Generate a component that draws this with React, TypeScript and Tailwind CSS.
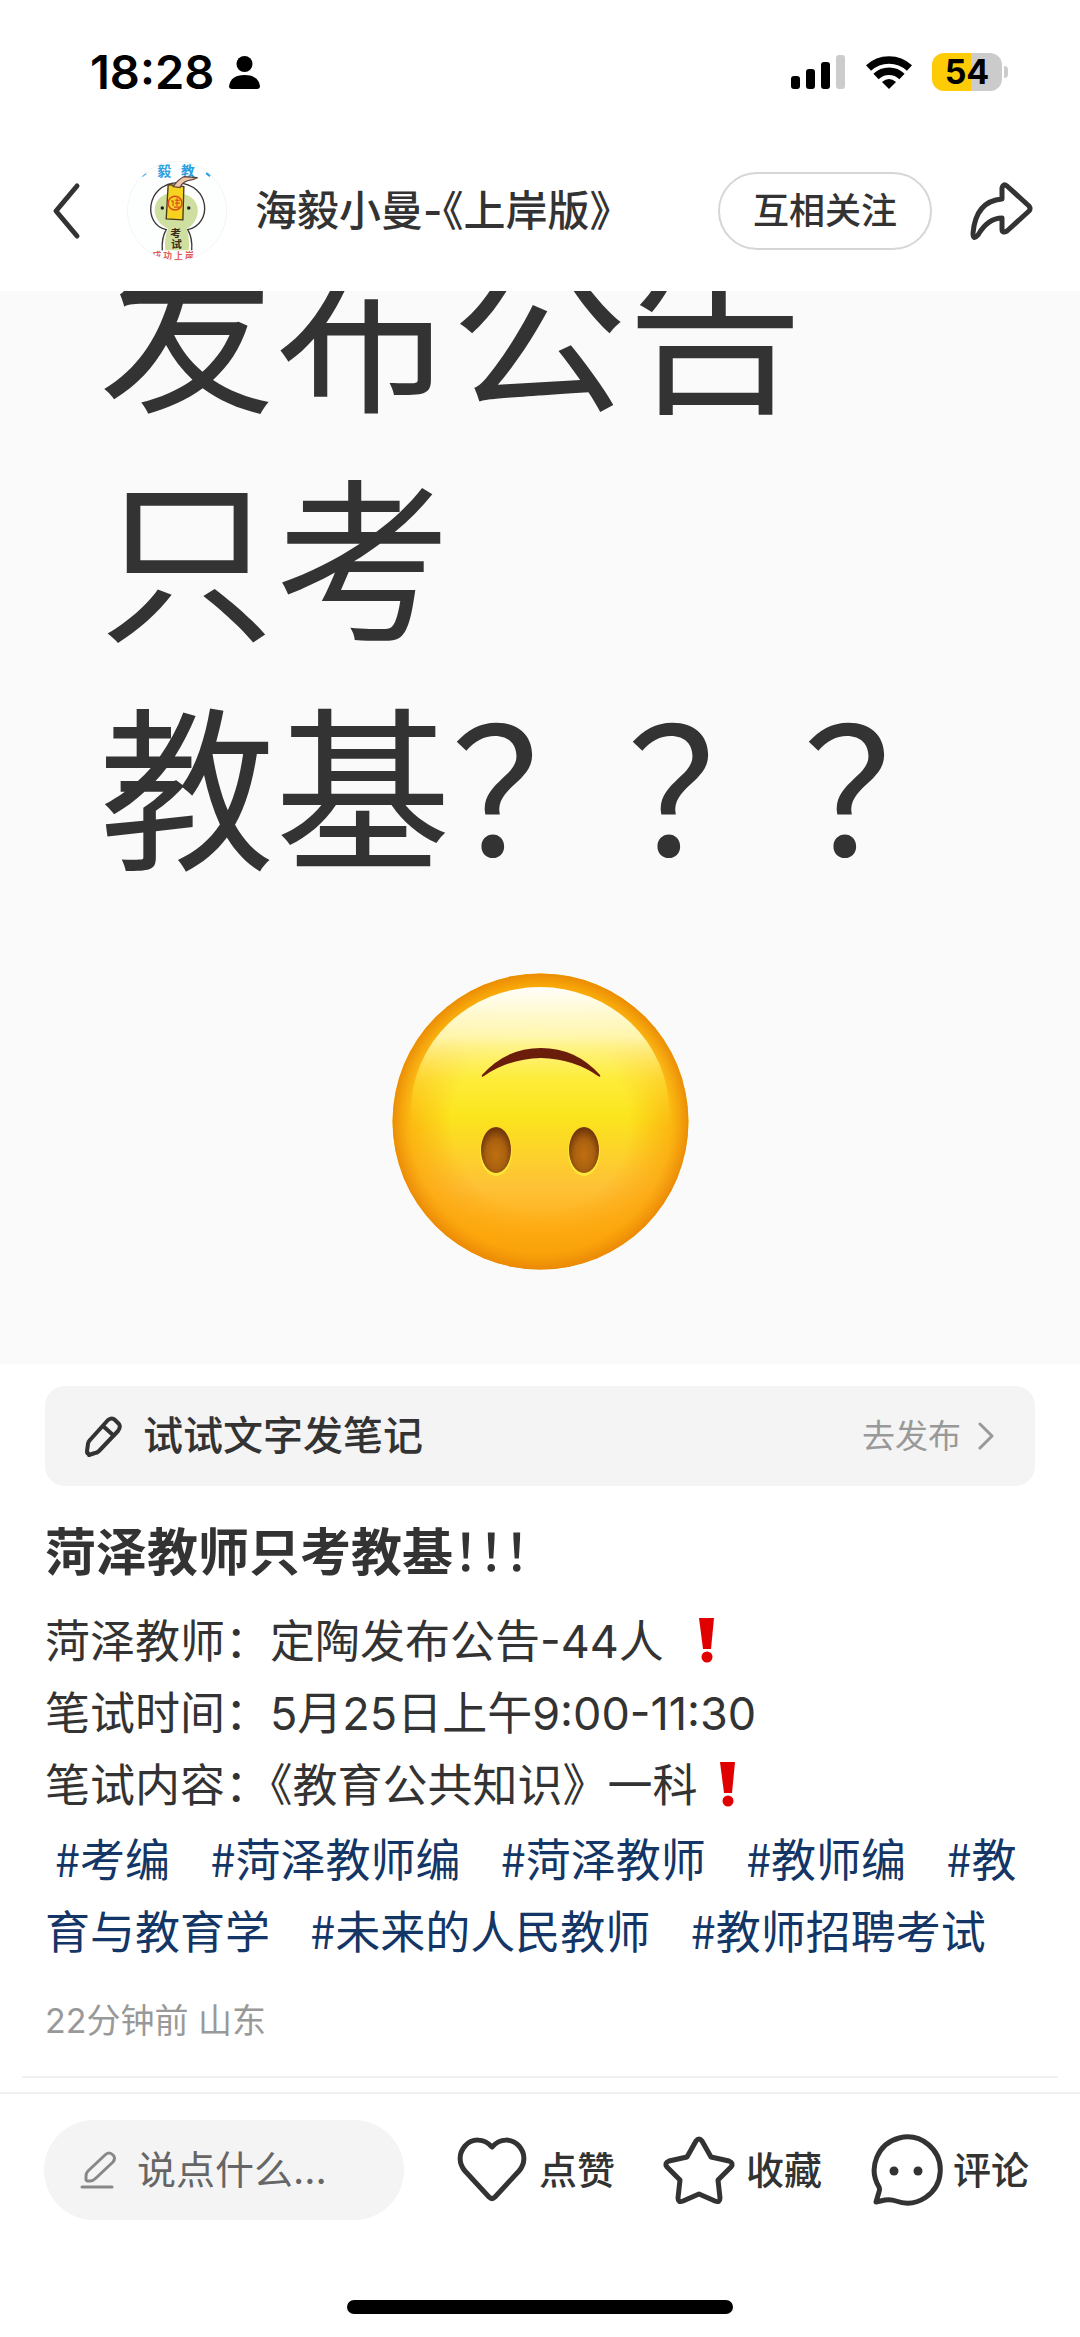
import React from 'react';

const tags = ['考编', '菏泽教师编', '菏泽教师', '教师编', '教育与教育学', '未来的人民教师', '教师招聘考试'];

const Avatar = () => (
  <svg className="size-[100px] shrink-0 rounded-full border border-[#f2f2f2]" viewBox="0 0 100 100" role="img" aria-label="海毅小曼头像">
    <rect width="100" height="100" fill="#fdfefe" />
    <g className="font-['Noto_Sans_CJK_SC',sans-serif]" fontWeight="700">
      <text x="30" y="14" fontSize="14" fill="#2f9fe0">毅</text>
      <text x="54" y="14" fontSize="14" fill="#2f9fe0">教</text>
      <text x="25" y="99" fontSize="9" fill="#e05a5a" xmlSpace="preserve">成 功 上 岸</text>
    </g>
    <path d="M14 14l4-3M80 11l4 3" stroke="#2f9fe0" strokeWidth="3" />
    {/* Figure */}
    <path d="M36 90Q35 78 40 69C16 64 19 24 50 22C84 23 86 64 62 69Q67 78 66 90Z" fill="#fff" />
    <path d="M38 90Q37 76 41 68C22 60 22 33 46 31C78 31 76 60 60 68Q63 78 62 90Z" fill="#cfdf9f" />
    <path d="M35 90Q34 78 39 69C15 64 18 23 50 21C85 23 86 64 61 69Q66 78 65 90" fill="none" stroke="#3b3535" strokeWidth="1.4" />
    <path d="M41 23L57 25L56 59L39 58Z" fill="#f7d321" stroke="#4a3c1c" strokeWidth="1.4" />
    <circle cx="48" cy="42" r="7" fill="none" stroke="#dc4a1c" strokeWidth="1.6" />
    <path d="M44 40h2v5M48 39h5M50 37v8M48 42h5M47 46h6" fill="none" stroke="#dc4a1c" strokeWidth="1.2" />
    <path d="M46 25Q52 17 57 15L71 16L66 18Q56 19 53 26Z" fill="#eec6ac" stroke="#5b4038" strokeWidth="1.2" />
    <circle cx="35" cy="47" r="1.8" fill="#222" />
    <circle cx="62" cy="47" r="1.8" fill="#222" />
    <g className="font-['Noto_Sans_CJK_SC',sans-serif]" fontWeight="700" fontSize="11" fill="#3a2a18">
      <text x="43" y="77">考</text>
      <text x="44" y="88">试</text>
    </g>
  </svg>
);

const UpsideDownFace = () => (
  <svg className="size-[297px]" viewBox="0 0 297 297" role="img" aria-label="倒脸">
    <defs>
      <linearGradient id="face" x1="0" y1="0" x2="0" y2="1">
        <stop offset="0" stopColor="#ffc800" />
        <stop offset="0.3" stopColor="#fde92f" />
        <stop offset="0.48" stopColor="#fbe51c" />
        <stop offset="0.72" stopColor="#fec137" />
        <stop offset="0.88" stopColor="#ffad14" />
        <stop offset="1" stopColor="#f09a08" />
      </linearGradient>
      <radialGradient id="edge" cx="0.5" cy="0.5" r="0.5">
        <stop offset="0.6" stopColor="#fb9d05" stopOpacity="0" />
        <stop offset="0.88" stopColor="#fba308" stopOpacity="0.65" />
        <stop offset="1" stopColor="#ea8806" stopOpacity="0.95" />
      </radialGradient>
      <linearGradient id="shine" x1="0" y1="0" x2="0" y2="1">
        <stop offset="0" stopColor="#fffefa" />
        <stop offset="0.2" stopColor="#fff8b4" stopOpacity="0.95" />
        <stop offset="0.38" stopColor="#fff04a" stopOpacity="0.45" />
        <stop offset="0.56" stopColor="#fde82e" stopOpacity="0" />
      </linearGradient>
      <radialGradient id="eye" cx="0.5" cy="0.6" r="0.55">
        <stop offset="0" stopColor="#bf6f10" />
        <stop offset="0.6" stopColor="#a9600f" />
        <stop offset="1" stopColor="#74380a" />
      </radialGradient>
    </defs>
    <circle cx="148.500" cy="148.500" r="148" fill="url(#face)" />
    <circle cx="148.500" cy="148.500" r="148" fill="url(#edge)" />
    <ellipse cx="148" cy="138" rx="129" ry="124" fill="url(#shine)" />
    <path d="M90 102Q114 75 149 75Q184 75 208 102Q209 105 206 103Q182 86 149 85Q116 86 92 103Q89 105 90 102Z" fill="#6b1d0c" />
    <ellipse cx="104" cy="179" rx="16" ry="24" fill="#fde53a" />
    <ellipse cx="192" cy="179" rx="16" ry="24" fill="#fde53a" />
    <ellipse cx="104" cy="177" rx="15" ry="23" fill="url(#eye)" />
    <ellipse cx="192" cy="177" rx="15" ry="23" fill="url(#eye)" />
  </svg>
);

const RedMark = () => (
  <svg className="inline-block h-[45px] w-[60px] align-[-5px]" viewBox="0 0 60 45" role="img" aria-label="❗">
    <path d="M22 0H37L34 31H26Z" fill="#e00000" />
    <circle cx="30" cy="39" r="5.500" fill="#e00000" />
  </svg>
);

const HeartIcon = () => (
  <svg className="h-[70px] w-[74px]" viewBox="0 0 74 70" fill="none" stroke="currentColor" strokeWidth="5" strokeLinejoin="round">
    <path d="M37 12C29 3 17 3 10 11C3 19 4 29 10 36L34 62Q37 65 40 62L64 36C70 29 71 19 64 11C57 3 45 3 37 12Z" />
  </svg>
);

const StarIcon = () => (
  <svg className="h-[70px] w-[74px]" viewBox="0 0 74 70" fill="none" stroke="currentColor" strokeWidth="5" strokeLinejoin="round">
    <path d="M34 6Q37 2 40 6L49 22L67 26Q72 28 69 32L56 45L58 63Q58 68 53 66L37 59L21 66Q16 68 16 63L18 45L5 32Q2 28 7 26L25 22Z" />
  </svg>
);

const CommentIcon = () => (
  <svg className="h-[72px] w-[74px]" viewBox="0 0 74 72" fill="none" stroke="currentColor" strokeWidth="5" strokeLinejoin="round">
    <path d="M10 53A33 33 0 1 1 27 67Q22 65 16 66L7 68L10 58Q11 55 10 53Z" />
    <circle cx="25" cy="37" r="4.500" fill="currentColor" stroke="none" />
    <circle cx="49" cy="37" r="4.500" fill="currentColor" stroke="none" />
  </svg>
);

const actions = [
  { label: '点赞', Icon: HeartIcon },
  { label: '收藏', Icon: StarIcon },
  { label: '评论', Icon: CommentIcon },
];

const StatusBar = () => (
  <div className="flex h-[144px] items-center justify-between pr-[72px] pl-[90px] text-black">
    <div className="flex items-center gap-[15px]">
      <span className="text-[47px] leading-[48px] font-semibold">18:28</span>
      <svg className="h-[33px] w-[31px]" viewBox="0 0 31 33" fill="currentColor">
        <circle cx="15.500" cy="8" r="8" />
        <path d="M3 33Q0 33 0 30Q2 19 15.500 19Q29 19 31 30Q31 33 28 33Z" />
      </svg>
    </div>
    <div className="flex items-center">
      <svg className="h-[34px] w-[54px]" viewBox="0 0 54 34">
        <rect x="0" y="21" width="9" height="13" rx="3" />
        <rect x="15" y="14" width="9" height="20" rx="3" />
        <rect x="30" y="7" width="9" height="27" rx="3" />
        <rect x="45" y="0" width="9" height="34" rx="3" fill="#ccc" />
      </svg>
      <svg className="ml-[21px] h-[34px] w-[46px]" viewBox="0 0 46 34" fill="none" stroke="currentColor" strokeWidth="7.500">
        <path d="M2.500 13A30 30 0 0 1 43.500 13" />
        <path d="M10 21.500A18.500 18.500 0 0 1 36 21.500" />
        <path d="M16 27Q23 21 30 27L23 34Z" fill="currentColor" stroke="none" />
      </svg>
      <div className="ml-5 flex h-[38px] w-[70px] items-center justify-center rounded-xl bg-linear-to-r from-[#fecb07] from-56% to-[#cbcbcb] to-56% text-[34px] leading-none font-bold">
        54
      </div>
      <span className="ml-0.5 h-3 w-1 rounded-r-full bg-[#cbcbcb]" />
    </div>
  </div>
);

const Header = () => (
  <header className="mb-[13px] flex h-[134px] items-center pr-[46px] pl-[51px]">
    <button type="button" aria-label="返回">
      <svg className="h-[58px] w-[30px]" viewBox="0 0 30 58" fill="none" stroke="currentColor" strokeWidth="5" strokeLinecap="round" strokeLinejoin="round">
        <path d="M26 4L5 29L26 54" />
      </svg>
    </button>
    <div className="ml-[46px] flex flex-1 items-center gap-7">
      <Avatar />
      <h2 className="text-[42px] leading-[56px] font-medium whitespace-nowrap">
        海毅小曼-<span className="[font-feature-settings:'halt']">《上岸版》</span>
      </h2>
    </div>
    <button type="button" className="h-[78px] w-[214px] rounded-full border-2 border-[#d6d6d6] text-[36px] leading-none font-medium">
      互相关注
    </button>
    <button type="button" aria-label="分享" className="ml-9">
      <svg className="h-[60px] w-[66px]" viewBox="0 0 66 60" fill="none" stroke="currentColor" strokeWidth="5" strokeLinejoin="round">
        <path d="M34 18V7Q35 2 39 5L61 25Q63 28 61 30L39 50Q34 53 34 48V37Q20 37 10 54Q5 60 5 52Q8 20 34 18Z" />
      </svg>
    </button>
  </header>
);

export default function App() {
  return (
    <div className="bg-white font-['Inter','Noto_Sans_CJK_SC',sans-serif] text-[#333] [text-autospace:no-autospace]" lang="zh-CN">
      <StatusBar />
      <Header />

      <main>
        {/* Note picture, scrolled part of the way up */}
        <div className="flex h-[1073px] flex-col justify-end overflow-hidden bg-[#fafafa] pb-[94px]">
          <p className="mb-[66px] shrink-0 pl-[99px] text-[176px] leading-[229px]">
            发布公告
            <br />
            只考
            <br />
            教基？？？
          </p>
          <div className="flex shrink-0 justify-center">
            <UpsideDownFace />
          </div>
        </div>

        <section className="px-[45px] pt-[22px]">
          <a href="#publish" className="flex h-[100px] items-center justify-between rounded-[20px] bg-[#f4f4f4] pr-10 pl-[38px]">
            <span className="flex items-center gap-5 text-[40px] leading-[56px] font-medium">
              <svg className="h-[42px] w-10" viewBox="0 0 40 42" fill="none" stroke="currentColor" strokeWidth="4" strokeLinejoin="round">
                <path d="M5 38Q4 39 4 36L5 29Q5 27 7 25L25 5Q29 2 32 5L36 9Q38 12 35 16L16 36Q14 38 12 38L6 40Z" />
                <path d="M20 11L30 20" />
              </svg>
              试试文字发笔记
            </span>
            <span className="flex items-center gap-4 text-[33px] leading-[44px] text-[#999]">
              去发布
              <svg className="h-7 w-[18px]" viewBox="0 0 18 28" fill="none" stroke="currentColor" strokeWidth="3" strokeLinecap="round" strokeLinejoin="round">
                <path d="M3 2L15 14L3 26" />
              </svg>
            </span>
          </a>

          <h1 className="mt-[35px] text-[51px] leading-[64px] font-bold">
            菏泽教师只考教基<span className="font-medium [font-feature-settings:'halt']">！！！</span>
          </h1>
          <div className="mt-[21px] text-[45px] leading-[72px]">
            <p>菏泽教师：定陶发布公告-44人 <RedMark /></p>
            <p>笔试时间：5月25日上午9:00-11:30</p>
            <p>笔试内容：《教育公共知识》一科<RedMark /></p>
            <p className="font-['Noto_Sans_CJK_SC',sans-serif] text-[#133667]">
              {tags.map((tag) => (
                <React.Fragment key={tag}>
                  {'\u00a0'}
                  <a href={`#${tag}`}>#{tag}</a>
                  {'\u00a0\u00a0 '}
                </React.Fragment>
              ))}
            </p>
          </div>
          <p className="mt-[33px] text-[34px] leading-[44px] text-[#999]">22分钟前 山东</p>
        </section>
        <hr className="mx-[22px] mt-[33px] border-t-2 border-[#f0f0f0]" />
      </main>

      <footer className="mt-[14px] border-t-2 border-[#f0f0f0] pt-[26px] pb-[22px]">
        <div className="flex items-center justify-between pr-[51px] pl-[44px]">
          <label className="flex h-[100px] w-[360px] items-center gap-5 rounded-full bg-[#f4f4f4] pl-[35px] text-[#888]">
            <svg className="h-[42px] w-[38px] shrink-0" viewBox="0 0 38 42" fill="none" stroke="currentColor" strokeWidth="3" strokeLinecap="round" strokeLinejoin="round">
              <path d="M7 31V27Q7 24 9 22L26 6Q30 2 34 6Q37 9 34 13L17 29Q14 32 11 32H8Z" />
              <path d="M3 38H33" />
            </svg>
            <input
              type="text"
              aria-label="说点什么"
              placeholder="说点什么..."
              className="w-[230px] bg-transparent text-[39px] leading-[56px] outline-none placeholder:text-[#666]"
            />
          </label>
          <div className="flex gap-[47px]">
            {actions.map(({ label, Icon }) => (
              <button key={label} type="button" className="flex items-center gap-2.5 text-[38px] leading-[56px] font-medium whitespace-nowrap">
                <Icon />
                {label}
              </button>
            ))}
          </div>
        </div>
        <div className="mx-auto mt-20 h-[14px] w-[386px] rounded-full bg-black" />
      </footer>
    </div>
  );
}
